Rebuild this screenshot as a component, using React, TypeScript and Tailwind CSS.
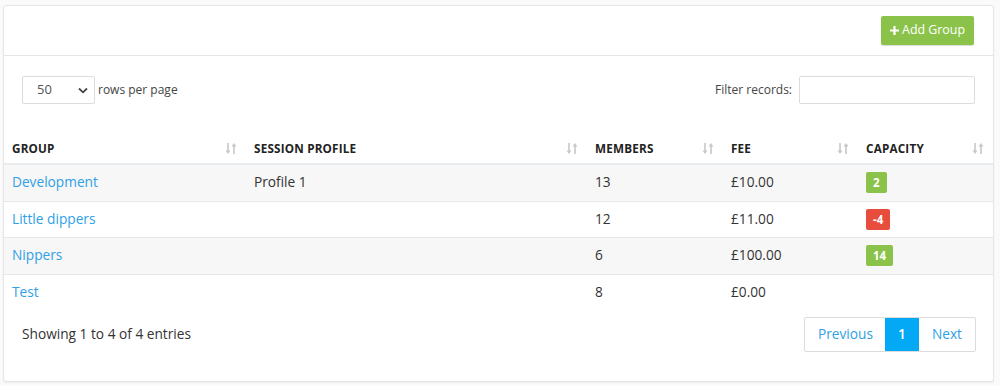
import React from "react";

const SortIcon = () => (
  <svg width="12" height="13" viewBox="0 0 12 13" className="shrink-0">
    <g fill="#c8c8c8">
      <rect x="2.2" y="1" width="1.6" height="9" />
      <path d="M0.5 8.5 L5.5 8.5 L3 12 Z" />
      <rect x="8.2" y="3" width="1.6" height="9" />
      <path d="M6.5 4.5 L11.5 4.5 L9 1 Z" />
    </g>
  </svg>
);

const rows = [
  { group: "Development", profile: "Profile 1", members: "13", fee: "£10.00", cap: { v: "2", c: "bg-[#8bc34a]" } },
  { group: "Little dippers", profile: "", members: "12", fee: "£11.00", cap: { v: "-4", c: "bg-[#e74c3c]" } },
  { group: "Nippers", profile: "", members: "6", fee: "£100.00", cap: { v: "14", c: "bg-[#8bc34a]" } },
  { group: "Test", profile: "", members: "8", fee: "£0.00", cap: null },
];

const cols = [
  { label: "GROUP", w: "w-[242px]" },
  { label: "SESSION PROFILE", w: "w-[341px]" },
  { label: "MEMBERS", w: "w-[136px]" },
  { label: "FEE", w: "w-[135px]" },
  { label: "CAPACITY", w: "w-[135px]" },
];

export default function App() {
  return (
    <div className="w-[1000px] h-[386px] bg-[#fafafa] pt-[5px] pl-[3px]" style={{ fontFamily: '"Open Sans", sans-serif' }}>
      <div className="w-[991px] h-[377px] bg-white border border-[#e6e6e6] rounded-[3px] shadow-[0_1px_2px_rgba(0,0,0,0.06)] flex flex-col">
        <div className="h-[50px] border-b border-[#e5e5e5] flex items-center justify-end pr-[19px]">
          <button className="h-[29px] pl-[9px] pr-[9px] bg-[#8bc34a] rounded-[2px] text-white text-[12.4px] flex items-center gap-[3px] shadow-[0_1px_1px_rgba(0,0,0,0.15)]">
            <svg width="9" height="9" viewBox="0 0 10 10">
              <path d="M3.8 0 H6.2 V3.8 H10 V6.2 H6.2 V10 H3.8 V6.2 H0 V3.8 H3.8 Z" fill="white" />
            </svg>
            Add Group
          </button>
        </div>
        <div className="flex items-center justify-between px-[18px] pt-[20px]">
          <div className="flex items-center gap-[3px]">
            <div className="w-[73px] h-[28px] border border-[#dcdcdc] rounded-[2px] flex items-center justify-between pl-[14px] pr-[6px] text-[13px] text-[#555]">
              <span>50</span>
              <svg width="10" height="7" viewBox="0 0 10 7">
                <path d="M1 1.5 L5 5.3 L9 1.5" stroke="#444" strokeWidth="1.8" fill="none" />
              </svg>
            </div>
            <span className="text-[12px] text-[#444]">rows per page</span>
          </div>
          <div className="flex items-center gap-[7px]">
            <span className="text-[12px] text-[#444]">Filter records:</span>
            <div className="w-[176px] h-[28px] border border-[#dcdcdc] rounded-[2px]" />
          </div>
        </div>
        <div className="mt-[30px]">
          <div className="flex h-[31px] items-center border-b-[2px] border-[#e8ebee]">
            {cols.map((c) => (
              <div key={c.label} className={`${c.w} flex items-center justify-between pl-[8px] pr-[9px]`}>
                <span className="text-[11.7px] font-bold text-[#222] tracking-[0.2px]">{c.label}</span>
                <SortIcon />
              </div>
            ))}
          </div>
          {rows.map((r, i) => (
            <div key={r.group} className={`flex items-center h-[36.5px] text-[13.7px] ${i % 2 === 0 ? "bg-[#f7f7f7]" : "bg-white"} ${i < 3 ? "border-b border-[#e8e8e8]" : ""}`}>
              <div className="w-[242px] pl-[8px] text-[#2f9fe6]">{r.group}</div>
              <div className="w-[341px] pl-[8px] text-[#333]">{r.profile}</div>
              <div className="w-[136px] pl-[8px] text-[#333]">{r.members}</div>
              <div className="w-[135px] pl-[8px] text-[#333]">{r.fee}</div>
              <div className="w-[135px] pl-[8px]">
                {r.cap && (
                  <span className={`${r.cap.c} text-white text-[11.5px] font-bold rounded-[2px] px-[7px] inline-flex items-center h-[21px]`}>{r.cap.v}</span>
                )}
              </div>
            </div>
          ))}
        </div>
        <div className="flex items-center justify-between pl-[18px] pr-[17px] mt-[6px]">
          <span className="text-[13.7px] text-[#333]">Showing 1 to 4 of 4 entries</span>
          <div className="flex h-[35px] border border-[#dcdcdc] rounded-[2px] text-[13.7px]">
            <span className="pl-[13px] pr-[12px] flex items-center text-[#2f9fe6]">Previous</span>
            <span className="w-[34px] flex items-center justify-center bg-[#03a9f4] text-white font-semibold">1</span>
            <span className="px-[13px] flex items-center text-[#2f9fe6]">Next</span>
          </div>
        </div>
      </div>
    </div>
  );
}
